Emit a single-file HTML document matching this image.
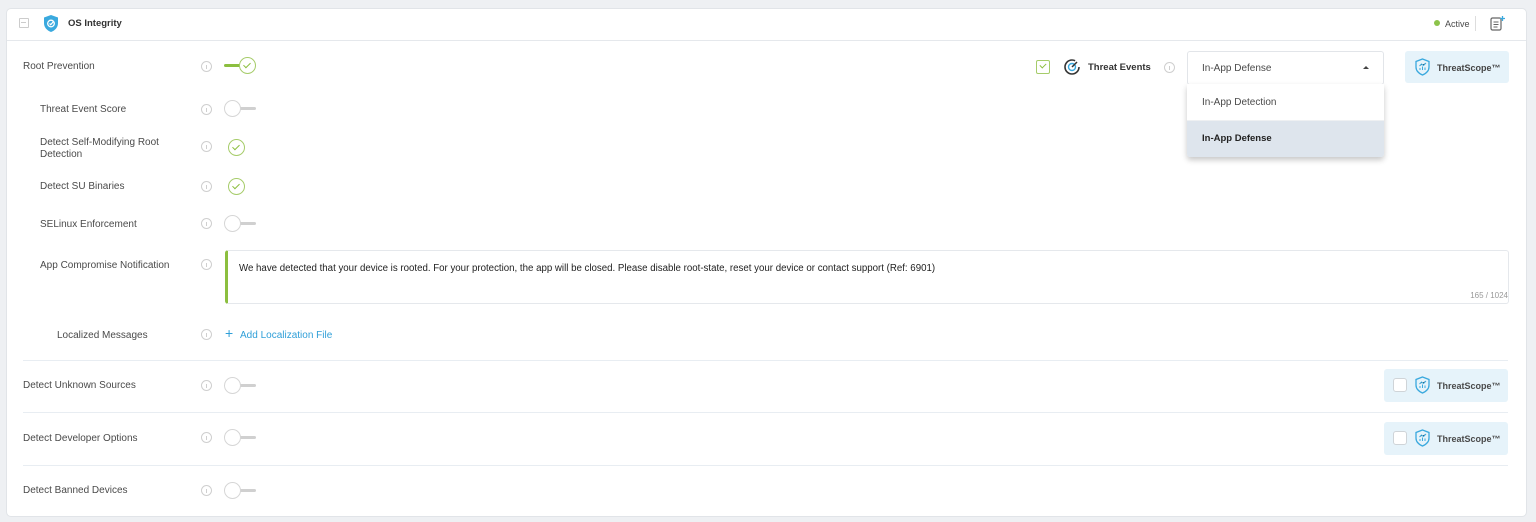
<!DOCTYPE html>
<html><head><meta charset="utf-8"><style>
body{margin:0;width:1536px;height:522px;background:#eef0f3;font-family:"Liberation Sans",sans-serif;overflow:hidden;position:relative;color:#444}
.a{position:absolute}
.card{left:6px;top:8px;width:1519px;height:507px;background:#fff;border:1px solid #e1e4e8;border-radius:5px}
.t{position:absolute;font-size:10px;color:#4a4a4a;white-space:nowrap;line-height:12px}
.info{position:absolute;width:9px;height:9px;border:1px solid #cfcfcf;border-radius:50%}
.info:after{content:"";position:absolute;left:4px;top:3px;width:1px;height:4px;background:#cfcfcf}
.tr{position:absolute;width:26px;height:3px;background:#d0d0d0;border-radius:2px}
.th{position:absolute;width:15px;height:15px;border:1px solid #d6d6d6;border-radius:50%;background:#fff}
.ck{position:absolute;width:15px;height:15px;border:1px solid #a6cc6a;border-radius:50%;background:#fff}
.ck:after{content:"";position:absolute;left:5px;top:3px;width:3px;height:6px;border:solid #8cbf3f;border-width:0 1.3px 1.3px 0;transform:rotate(45deg)}
.sep{position:absolute;left:23px;width:1485px;height:1px;background:#e8edf2}
.ts{position:absolute;background:#e6f3fa;border-radius:3px}
.box{position:absolute;width:12px;height:12px;border:1px solid #cfd4d8;border-radius:3px;background:#fff}
</style></head><body>
<div class="a card"></div>
<div class="a" style="left:7px;top:40px;width:1519px;height:1px;background:#e5e8ec"></div>
<div class="a" style="left:19px;top:18px;width:8px;height:8px;border:1px solid #ccc;border-radius:1px"></div>
<div class="a" style="left:21px;top:22px;width:5px;height:1px;background:#ccc"></div>
<svg class="a" style="left:43px;top:14px" width="16" height="19" viewBox="0 0 16 19"><path d="M8 1L15 3.5V9c0 4.5-3 7.5-7 9C4 16.5 1 13.5 1 9V3.5z" fill="#3aa9de"/><circle cx="8" cy="9.5" r="3.3" fill="none" stroke="#fff" stroke-width="1.3"/><path d="M6.5 9.5l1.2 1.2L10.5 7.5" fill="none" stroke="#fff" stroke-width="1.2"/></svg>
<div class="t" style="left:68px;top:18px;font-weight:bold;color:#333;font-size:9.5px">OS Integrity</div>
<div class="a" style="left:1434px;top:20px;width:6px;height:6px;border-radius:50%;background:#8cc34a"></div>
<div class="t" style="left:1445px;top:18px;font-size:9px">Active</div>
<div class="a" style="left:1475px;top:16px;width:1px;height:15px;background:#ddd"></div>
<svg class="a" style="left:1489px;top:15px" width="17" height="17" viewBox="0 0 17 17"><rect x="2" y="3" width="10" height="12" rx="1.5" fill="none" stroke="#666" stroke-width="1.2"/><path d="M4.5 7h5M4.5 9.5h5M4.5 12h4" stroke="#666" stroke-width="1"/><path d="M13.5 1v5M11 3.5h5" stroke="#3aa9de" stroke-width="1.3"/></svg>

<div class="t" style="left:23px;top:61px">Root Prevention</div>
<div class="info" style="left:201px;top:61px"></div>
<div class="a" style="left:224px;top:64px;width:20px;height:3px;background:#8cbf3f;border-radius:2px"></div>
<div class="ck" style="left:239px;top:57px"></div>

<div class="t" style="left:40px;top:104px">Threat Event Score</div>
<div class="info" style="left:201px;top:104px"></div>
<div class="tr" style="left:230px;top:107px"></div><div class="th" style="left:224px;top:100px"></div>

<div class="t" style="left:40px;top:137px">Detect Self-Modifying Root<br>Detection</div>
<div class="info" style="left:201px;top:141px"></div>
<div class="ck" style="left:228px;top:139px"></div>

<div class="t" style="left:40px;top:181px">Detect SU Binaries</div>
<div class="info" style="left:201px;top:181px"></div>
<div class="ck" style="left:228px;top:178px"></div>

<div class="t" style="left:40px;top:219px">SELinux Enforcement</div>
<div class="info" style="left:201px;top:218px"></div>
<div class="tr" style="left:230px;top:222px"></div><div class="th" style="left:224px;top:215px"></div>

<div class="t" style="left:40px;top:260px">App Compromise Notification</div>
<div class="info" style="left:201px;top:259px"></div>
<div class="a" style="left:225px;top:250px;width:1280px;height:52px;border:1px solid #e5e8ec;border-left:3px solid #8cbf3f;border-radius:3px"></div>
<div class="t" style="left:239px;top:263px;color:#222;font-size:9.7px">We have detected that your device is rooted. For your protection, the app will be closed. Please disable root-state, reset your device or contact support (Ref: 6901)</div>
<div class="t" style="left:1440px;top:290px;width:68px;text-align:right;font-size:8px;color:#999">165 / 1024</div>

<div class="t" style="left:57px;top:330px">Localized Messages</div>
<div class="info" style="left:201px;top:329px"></div>
<div class="t" style="left:225px;top:327px;color:#2f9fd8;font-size:14px">+</div>
<div class="t" style="left:240px;top:330px;color:#2f9fd8">Add Localization File</div>

<div class="sep" style="top:360px"></div>
<div class="t" style="left:23px;top:380px">Detect Unknown Sources</div>
<div class="info" style="left:201px;top:380px"></div>
<div class="tr" style="left:230px;top:384px"></div><div class="th" style="left:224px;top:377px"></div>
<div class="sep" style="top:412px"></div>
<div class="t" style="left:23px;top:433px">Detect Developer Options</div>
<div class="info" style="left:201px;top:432px"></div>
<div class="tr" style="left:230px;top:436px"></div><div class="th" style="left:224px;top:429px"></div>
<div class="sep" style="top:465px"></div>
<div class="t" style="left:23px;top:485px">Detect Banned Devices</div>
<div class="info" style="left:201px;top:485px"></div>
<div class="tr" style="left:230px;top:489px"></div><div class="th" style="left:224px;top:482px"></div>

<!-- threat events -->
<div class="a" style="left:1036px;top:60px;width:12px;height:12px;border:1px solid #a6cc6a;border-radius:2px"></div>
<div class="a" style="left:1041px;top:62px;width:3px;height:5px;border:solid #8cbf3f;border-width:0 1px 1px 0;transform:rotate(45deg)"></div>
<svg class="a" style="left:1063px;top:58px" width="18" height="18" viewBox="0 0 18 18"><circle cx="9" cy="9" r="7" fill="none" stroke="#333" stroke-width="1.6" stroke-dasharray="36 8"/><circle cx="9" cy="9" r="3.5" fill="none" stroke="#3aa9de" stroke-width="1.4"/><path d="M9 9l5-5" stroke="#333" stroke-width="1.5"/></svg>
<div class="t" style="left:1088px;top:62px;font-weight:bold;color:#333;font-size:9.5px">Threat Events</div>
<div class="info" style="left:1164px;top:62px"></div>
<div class="a" style="left:1187px;top:51px;width:195px;height:32px;border:1px solid #e2e5e9;border-radius:3px;background:#fff"></div>
<div class="t" style="left:1202px;top:63px">In-App Defense</div>
<div class="a" style="left:1363px;top:66px;width:0;height:0;border-left:3px solid transparent;border-right:3px solid transparent;border-bottom:3px solid #444"></div>
<div class="a" style="left:1187px;top:84px;width:197px;height:73px;background:#fff;box-shadow:0 3px 6px rgba(0,0,0,.22);border-radius:0 0 3px 3px;overflow:hidden">
<div style="height:36px;border-bottom:1px solid #eef0f2"></div>
<div style="height:37px;background:#dee5ed"></div></div>
<div class="t" style="left:1202px;top:97px">In-App Detection</div>
<div class="t" style="left:1202px;top:133px;font-weight:bold;color:#222;font-size:9.5px">In-App Defense</div>

<div class="ts" style="left:1405px;top:51px;width:104px;height:32px"></div>
<svg class="a" style="left:1415px;top:58px" width="15" height="18" viewBox="0 0 15 18"><path d="M7.5 1L14 3.5V9c0 4-3 6.5-6.5 8C4 15.5 1 13 1 9V3.5z" fill="none" stroke="#3aa9de" stroke-width="1.3"/><path d="M5 12V10M7.5 12V8.5M10 12V9.5M4.5 8l2-2 2 1.5L11 5" stroke="#3aa9de" stroke-width="1"/></svg>
<div class="t" style="left:1437px;top:62px;font-weight:bold;color:#444;font-size:9px">ThreatScope™</div>

<div class="ts" style="left:1384px;top:369px;width:124px;height:33px"></div>
<div class="box" style="left:1393px;top:378px"></div>
<svg class="a" style="left:1415px;top:376px" width="15" height="18" viewBox="0 0 15 18"><path d="M7.5 1L14 3.5V9c0 4-3 6.5-6.5 8C4 15.5 1 13 1 9V3.5z" fill="none" stroke="#3aa9de" stroke-width="1.3"/><path d="M5 12V10M7.5 12V8.5M10 12V9.5M4.5 8l2-2 2 1.5L11 5" stroke="#3aa9de" stroke-width="1"/></svg>
<div class="t" style="left:1437px;top:380px;font-weight:bold;font-size:9px">ThreatScope™</div>

<div class="ts" style="left:1384px;top:422px;width:124px;height:33px"></div>
<div class="box" style="left:1393px;top:431px"></div>
<svg class="a" style="left:1415px;top:429px" width="15" height="18" viewBox="0 0 15 18"><path d="M7.5 1L14 3.5V9c0 4-3 6.5-6.5 8C4 15.5 1 13 1 9V3.5z" fill="none" stroke="#3aa9de" stroke-width="1.3"/><path d="M5 12V10M7.5 12V8.5M10 12V9.5M4.5 8l2-2 2 1.5L11 5" stroke="#3aa9de" stroke-width="1"/></svg>
<div class="t" style="left:1437px;top:433px;font-weight:bold;font-size:9px">ThreatScope™</div>
</body></html>
